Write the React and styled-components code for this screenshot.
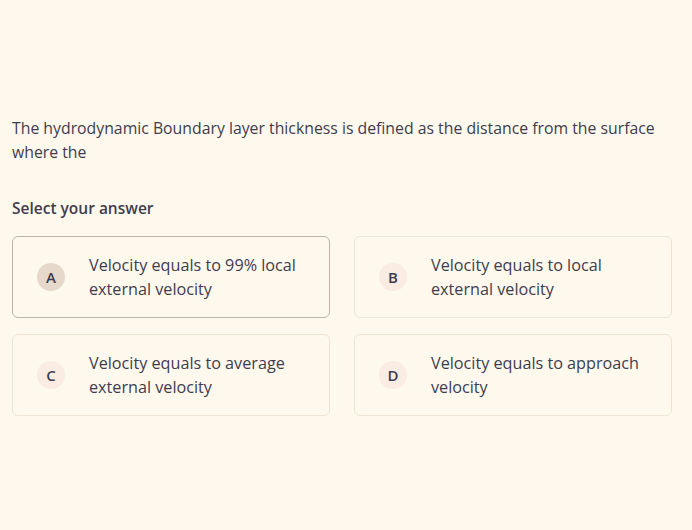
import React from "react";
import styled, { createGlobalStyle } from "styled-components";

const GlobalStyle = createGlobalStyle`
  html, body {
    margin: 0;
    background: #fff8ec;
  }
  body {
    font-family: "Open Sans", Lato, sans-serif;
    color: #3d3d4e;
  }
`;

const Page = styled.div`
  padding: 116px 20px 0 12px;
  min-height: 530px;
  box-sizing: border-box;
`;

const Question = styled.p`
  margin: 0;
  font-size: 15.8px;
  line-height: 24px;
`;

const Prompt = styled.h3`
  margin: 32px 0 16px;
  font-size: 15.5px;
  line-height: 24px;
  font-weight: 600;
`;

const Options = styled.div`
  display: grid;
  grid-template-columns: 1fr 1fr;
  column-gap: 24px;
  row-gap: 16px;
`;

const Option = styled.button`
  display: flex;
  align-items: center;
  gap: 24px;
  height: 82px;
  padding: 0 24px;
  box-sizing: border-box;
  text-align: left;
  font: inherit;
  color: inherit;
  background: #fff8ec;
  border: 1px solid ${(p) => (p.$selected ? "#c2b4a7" : "#f0e4d5")};
  border-radius: 6px;
  cursor: pointer;
`;

const Letter = styled.span`
  flex: none;
  width: 28px;
  height: 28px;
  border-radius: 50%;
  display: flex;
  align-items: center;
  justify-content: center;
  font-size: 15px;
  font-weight: 600;
  background: ${(p) => (p.$selected ? "#e6d9cc" : "#faece2")};
`;

const Label = styled.span`
  font-size: 16.2px;
  line-height: 24px;
`;

const options = [
  { key: "A", text: "Velocity equals to 99% local external velocity" },
  { key: "B", text: "Velocity equals to local external velocity" },
  { key: "C", text: "Velocity equals to average external velocity" },
  { key: "D", text: "Velocity equals to approach velocity" },
];

export default function App() {
  const selected = "A";
  return (
    <>
      <GlobalStyle />
      <Page>
        <Question>
          The hydrodynamic Boundary layer thickness is defined as the distance
          from the surface where the
        </Question>
        <Prompt>Select your answer</Prompt>
        <Options>
          {options.map((o) => (
            <Option key={o.key} $selected={o.key === selected}>
              <Letter $selected={o.key === selected}>{o.key}</Letter>
              <Label>{o.text}</Label>
            </Option>
          ))}
        </Options>
      </Page>
    </>
  );
}
